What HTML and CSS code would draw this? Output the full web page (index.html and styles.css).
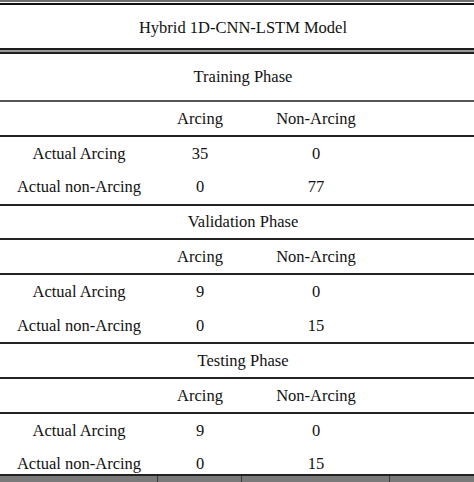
FILE: index.html
```html
<!DOCTYPE html>
<html lang="en">
<head>
<meta charset="utf-8">
<title>Hybrid 1D-CNN-LSTM Model</title>
<link rel="stylesheet" href="styles.css">
</head>
<body>
<div class="table">
  <div class="band-top"></div>
  <div class="rule rule-black"></div>
  <div class="title">Hybrid 1D-CNN-LSTM Model</div>
  <div class="double"><div class="d1"></div><div class="d2"></div><div class="d3"></div></div>

  <div class="phase phase-first">Training Phase</div>
  <div class="rule rule-gray"></div>
  <div class="row"><span></span><span>Arcing</span><span>Non-Arcing</span><span></span></div>
  <div class="rule"></div>
  <div class="row"><span>Actual Arcing</span><span>35</span><span>0</span><span></span></div>
  <div class="row row-b"><span>Actual non-Arcing</span><span>0</span><span>77</span><span></span></div>
  <div class="rule"></div>

  <div class="phase phase-mid">Validation Phase</div>
  <div class="rule"></div>
  <div class="row"><span></span><span>Arcing</span><span>Non-Arcing</span><span></span></div>
  <div class="rule"></div>
  <div class="row row-b"><span>Actual Arcing</span><span>9</span><span>0</span><span></span></div>
  <div class="row"><span>Actual non-Arcing</span><span>0</span><span>15</span><span></span></div>
  <div class="rule"></div>

  <div class="phase phase-mid2">Testing Phase</div>
  <div class="rule"></div>
  <div class="row"><span></span><span>Arcing</span><span>Non-Arcing</span><span></span></div>
  <div class="rule"></div>
  <div class="row"><span>Actual Arcing</span><span>9</span><span>0</span><span></span></div>
  <div class="row row-last"><span>Actual non-Arcing</span><span>0</span><span>15</span><span></span></div>
  <div class="rule"></div>
  <div class="band-bottom"><span></span><span></span><span></span><span></span></div>
</div>
</body>
</html>
```
FILE: styles.css
```css
html, body {
  margin: 0;
  padding: 0;
  background: #ffffff;
}
body {
  width: 474px;
  height: 482px;
  overflow: hidden;
  font-family: "Liberation Serif", "Times New Roman", serif;
  font-size: 16.5px;
  color: #111111;
}
.table {
  display: flex;
  flex-direction: column;
}
.band-top {
  height: 2px;
  background: #6e6e6e;
  margin-bottom: 1px;
}
.rule {
  height: 2px;
  background: #222222;
}
.rule-black {
  background: #111111;
}
.rule-gray {
  background: #555555;
}
.title {
  height: 40px;
  padding-top: 3px;
  padding-left: 12px;
  display: flex;
  align-items: center;
  justify-content: center;
}
.double {
  display: flex;
  flex-direction: column;
}
.double .d1, .double .d3 {
  height: 2px;
  background: #1e1e1e;
}
.double .d2 {
  height: 2px;
  background: #9a9a9a;
}
.phase {
  padding-left: 12px;
  display: flex;
  align-items: center;
  justify-content: center;
}
.phase-first {
  height: 46px;
}
.phase-mid {
  height: 32px;
}
.phase-mid2 {
  height: 33px;
}
.row {
  display: grid;
  grid-template-columns: 158px 84px 148px 1fr;
  height: 33px;
  align-items: center;
}
.row span {
  text-align: center;
}
.row-b {
  height: 34px;
}
.row-last {
  height: 27px;
  align-items: end;
  line-height: 20px;
}
.band-bottom {
  margin-top: 0;
  height: 6px;
  background: #7a7a7a;
  display: grid;
  grid-template-columns: 158px 84px 148px 1fr;
}
.band-bottom span {
  border-right: 1px solid #3a3a3a;
}
.band-bottom span:last-child {
  border-right: none;
}
```
